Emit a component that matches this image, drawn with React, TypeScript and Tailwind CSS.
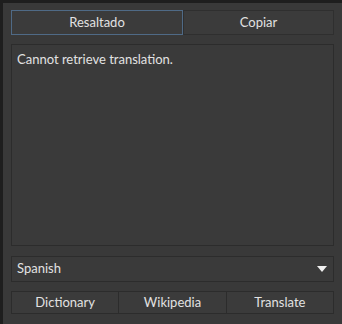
const tabs = ["Dictionary", "Wikipedia", "Translate"]

const App = () => {
  return (
    <div className="w-[342px] h-[324px] bg-[#1e1e1e] pl-[3px] pt-[3px] font-['Lato',sans-serif] text-[13px] text-[#e2e2e2]">
      <div className="w-full h-full bg-[#393939] px-[8px] pt-[7px] flex flex-col">
        <div className="flex h-[25px]">
          <button className="w-[172px] h-full border border-[#4f6a86] bg-[#3b3b3b]">Resaltado</button>
          <button className="flex-1 h-full border border-[#2f2f2f] bg-[#3b3b3b]">Copiar</button>
        </div>
        <div className="mt-[9px] h-[202px] border border-[#2c2c2c] bg-[#3a3a3a] px-[5px] pt-[5px]">
          Cannot retrieve translation.
        </div>
        <div className="mt-[10px] h-[26px] border border-[#2c2c2c] bg-[#3a3a3a] flex items-center justify-between pl-[5px] pr-[6px]">
          <span>Spanish</span>
          <svg width="10" height="6" viewBox="0 0 10 6">
            <path d="M0 0 L10 0 L5 6 Z" fill="#f0f0f0" />
          </svg>
        </div>
        <div className="mt-[9px] h-[23px] flex border border-[#2c2c2c]">
          {tabs.map((t, i) => (
            <div
              key={t}
              className={
                "flex-1 flex items-center justify-center bg-[#3b3b3b] " +
                (i > 0 ? "border-l border-[#2c2c2c]" : "")
              }
            >
              {t}
            </div>
          ))}
        </div>
      </div>
    </div>
  )
}

export default App
